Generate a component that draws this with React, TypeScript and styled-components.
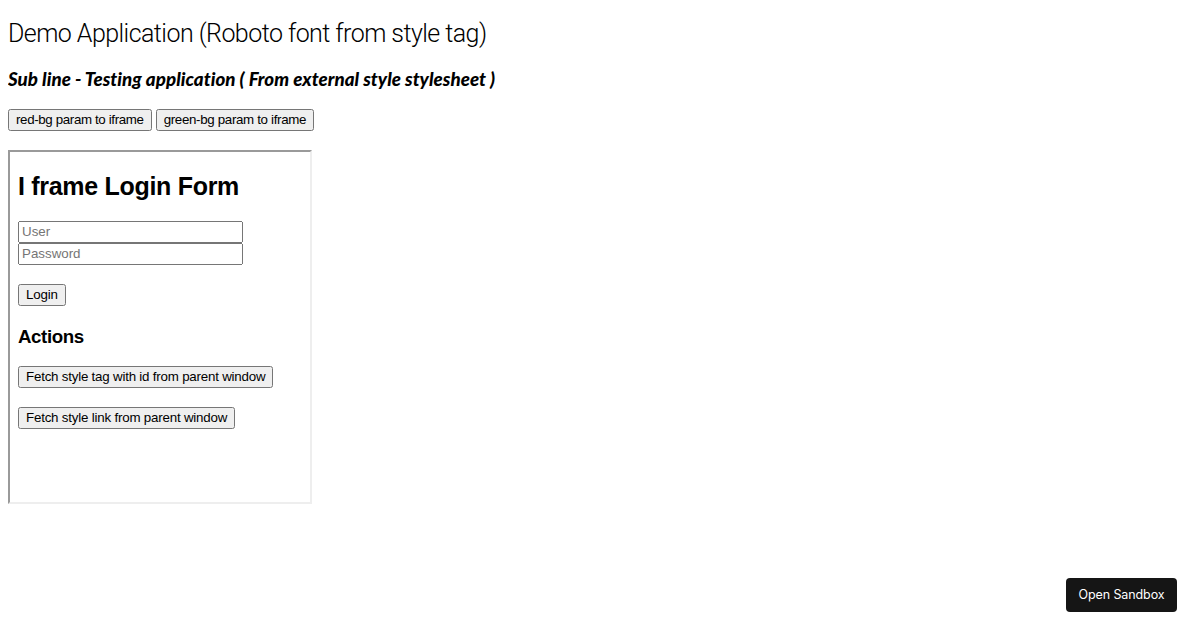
import styled, { createGlobalStyle } from "styled-components";

const GlobalStyle = createGlobalStyle`
  body {
    margin: 8px;
    background: #fff;
    color: #000;
    font-family: "Liberation Sans", Arial, sans-serif;
  }
`;

const Title = styled.h1`
  font-family: Roboto, sans-serif;
  font-size: 25px;
  line-height: 29px;
  font-weight: 300;
  letter-spacing: -0.55px;
  margin: 11px 0 20px;
`;

// the handwritten face of the original is not installed, a bold italic is the closest
const SubTitle = styled.h3`
  font-family: Lato, sans-serif;
  font-size: 18.72px;
  line-height: 22px;
  font-weight: 900;
  font-style: italic;
  letter-spacing: 0.04px;
  margin: 0 0 19px;
`;

const ButtonRow = styled.div`
  display: flex;
  gap: 4px;
  margin-bottom: 19px;
`;

const Button = styled.button<{ $spacing: number }>`
  box-sizing: border-box;
  height: 22px;
  padding: 0 6px 2px;
  font-family: "Liberation Sans", Arial, sans-serif;
  letter-spacing: ${props => props.$spacing}px;
`;

const FramePanel = styled.section`
  box-sizing: border-box;
  width: 304px;
  height: 354px;
  padding: 8px;
  border: 2px inset #eee;
`;

const FrameTitle = styled.h1`
  font-size: 25px;
  line-height: 28px;
  font-weight: 700;
  letter-spacing: -0.3px;
  margin: 12px 0 21px;
`;

const LoginForm = styled.form`
  display: flex;
  flex-direction: column;
  align-items: flex-start;
`;

const Field = styled.input`
  box-sizing: border-box;
  width: 225px;
  height: 22px;
  padding: 0 2px 2px;
  font-family: "Liberation Sans", Arial, sans-serif;
`;

const LoginButton = styled(Button)`
  margin-top: 19px;
`;

const ActionsTitle = styled.h3`
  font-size: 18.72px;
  line-height: 22px;
  font-weight: 700;
  letter-spacing: -0.4px;
  margin: 20px 0 18px;
`;

const ActionList = styled.div`
  display: flex;
  flex-direction: column;
  align-items: flex-start;
  gap: 19px;
`;

const SandboxLink = styled.a`
  position: fixed;
  right: 23px;
  bottom: 18px;
  box-sizing: border-box;
  display: flex;
  align-items: center;
  justify-content: center;
  width: 111px;
  height: 34px;
  padding-bottom: 2px;
  border-radius: 4px;
  background: #151515;
  color: #fff;
  font-family: Inter, sans-serif;
  font-size: 12.5px;
  letter-spacing: -0.1px;
`;

export default function App() {
  return (
    <>
      <GlobalStyle />
      <Title>Demo Application (Roboto font from style tag)</Title>
      <SubTitle>Sub line - Testing application ( From external style stylesheet )</SubTitle>
      <ButtonRow>
        <Button $spacing={-0.36}>red-bg param to iframe</Button>
        <Button $spacing={-0.33}>green-bg param to iframe</Button>
      </ButtonRow>
      <FramePanel>
        <FrameTitle>I frame Login Form</FrameTitle>
        <LoginForm>
          <Field placeholder="User" />
          <Field placeholder="Password" type="password" />
          <LoginButton $spacing={-0.2} type="button">Login</LoginButton>
        </LoginForm>
        <ActionsTitle>Actions</ActionsTitle>
        <ActionList>
          <Button $spacing={-0.21}>Fetch style tag with id from parent window</Button>
          <Button $spacing={-0.2}>Fetch style link from parent window</Button>
        </ActionList>
      </FramePanel>
      <SandboxLink>Open Sandbox</SandboxLink>
    </>
  );
}
